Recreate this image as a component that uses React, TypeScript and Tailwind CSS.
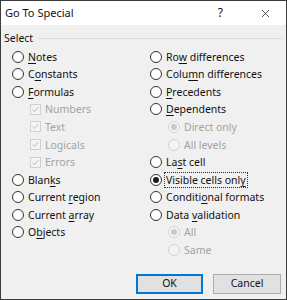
import React from 'react';
import { X } from 'lucide-react';

type Item = {
  label: string;
  key?: number; // index of underlined letter
  kind: 'radio' | 'check' | 'subradio' | 'empty';
  checked?: boolean;
  disabled?: boolean;
  focus?: boolean;
};

const left: Item[] = [
  { label: 'Notes', key: 0, kind: 'radio' },
  { label: 'Constants', key: 1, kind: 'radio' },
  { label: 'Formulas', key: 0, kind: 'radio' },
  { label: 'Numbers', kind: 'check', checked: true, disabled: true },
  { label: 'Text', kind: 'check', checked: true, disabled: true },
  { label: 'Logicals', kind: 'check', checked: true, disabled: true },
  { label: 'Errors', kind: 'check', checked: true, disabled: true },
  { label: 'Blanks', key: 4, kind: 'radio' },
  { label: 'Current region', key: 8, kind: 'radio' },
  { label: 'Current array', key: 8, kind: 'radio' },
  { label: 'Objects', key: 1, kind: 'radio' },
];

const right: Item[] = [
  { label: 'Row differences', key: 2, kind: 'radio' },
  { label: 'Column differences', key: 4, kind: 'radio' },
  { label: 'Precedents', key: 0, kind: 'radio' },
  { label: 'Dependents', key: 0, kind: 'radio' },
  { label: 'Direct only', kind: 'subradio', checked: true, disabled: true },
  { label: 'All levels', kind: 'subradio', disabled: true },
  { label: 'Last cell', key: 2, kind: 'radio' },
  { label: 'Visible cells only', key: 17, kind: 'radio', checked: true, focus: true },
  { label: 'Conditional formats', key: 7, kind: 'radio' },
  { label: 'Data validation', key: 5, kind: 'radio' },
  { label: 'All', kind: 'subradio', checked: true, disabled: true },
  { label: 'Same', kind: 'subradio', disabled: true },
];

function Label({ text, k }: { text: string; k?: number }) {
  if (k === undefined) return <>{text}</>;
  return (
    <>
      {text.slice(0, k)}
      <span className="underline underline-offset-[2px]">{text[k]}</span>
      {text.slice(k + 1)}
    </>
  );
}

function Radio({ checked, disabled }: { checked?: boolean; disabled?: boolean }) {
  return (
    <span
      className={
        'flex h-[12px] w-[12px] shrink-0 items-center justify-center rounded-full border ' +
        (disabled ? 'border-[#d4d4d4] bg-[#f4f4f4]' : 'border-[#333] bg-white')
      }
    >
      {checked && (
        <span className={'h-[6px] w-[6px] rounded-full ' + (disabled ? 'bg-[#c8c8c8]' : 'bg-[#1a1a1a]')} />
      )}
    </span>
  );
}

function Check() {
  return (
    <span className="flex h-[11px] w-[11px] shrink-0 items-center justify-center border border-[#d0d0d0] bg-[#f4f4f4]">
      <svg viewBox="0 0 11 11" className="h-[11px] w-[11px]">
        <path d="M2 5.6 L4.3 8 L9 2.6" fill="none" stroke="#b8b8b8" strokeWidth="1.2" />
      </svg>
    </span>
  );
}

function Row({ item }: { item: Item }) {
  const indented = item.kind !== 'radio';
  return (
    <div className={'flex h-[17.6px] items-center ' + (indented ? 'pl-[18px]' : '')}>
      {item.kind === 'check' ? <Check /> : <Radio checked={item.checked} disabled={item.disabled} />}
      <span
        className={
          'whitespace-nowrap leading-[14px] ' +
          (item.disabled ? 'text-[#a3a3a3] ' : 'text-[#111] ') +
          (item.focus ? 'ml-[3px] px-[1px] outline outline-1 outline-dotted outline-[#333]' : 'ml-[4px]')
        }
      >
        <Label text={item.label} k={item.key} />
      </span>
    </div>
  );
}

export default function App() {
  return (
    <div
      className="flex h-[300px] w-[287px] flex-col border border-[#3c3c3c] bg-[#f0f0f0] text-[10.5px] text-[#111]"
      style={{ fontFamily: '"Noto Sans", "Open Sans", sans-serif' }}
    >
      <div className="flex h-[24px] shrink-0 items-center bg-white pl-[4px] text-[11px]">
        <span className="flex-1">Go To Special</span>
        <span className="mr-[36px] text-[12px]">?</span>
        <X className="mr-[14px] h-[13px] w-[13px]" strokeWidth={1.3} />
      </div>

      <div className="flex items-center pl-[3px] pr-[3px] pt-[6px]">
        <span>Select</span>
        <div className="ml-[5px] h-px flex-1 bg-[#dcdcdc]" />
      </div>

      <div className="grid grid-cols-[138px_1fr] pl-[11px] pt-[1px]">
        <div className="flex flex-col">
          {left.map((it) => (
            <Row key={it.label} item={it} />
          ))}
        </div>
        <div className="flex flex-col">
          {right.map((it) => (
            <Row key={it.label} item={it} />
          ))}
        </div>
      </div>

      <div className="mt-auto mb-[5px] flex justify-end gap-[10px] pr-[5px]">
        <button className="h-[20px] w-[67px] border-2 border-[#0078d7] bg-[#e1e1e1] text-[10.5px]">OK</button>
        <button className="h-[20px] w-[68px] border border-[#adadad] bg-[#e1e1e1] text-[10.5px]">Cancel</button>
      </div>
    </div>
  );
}
